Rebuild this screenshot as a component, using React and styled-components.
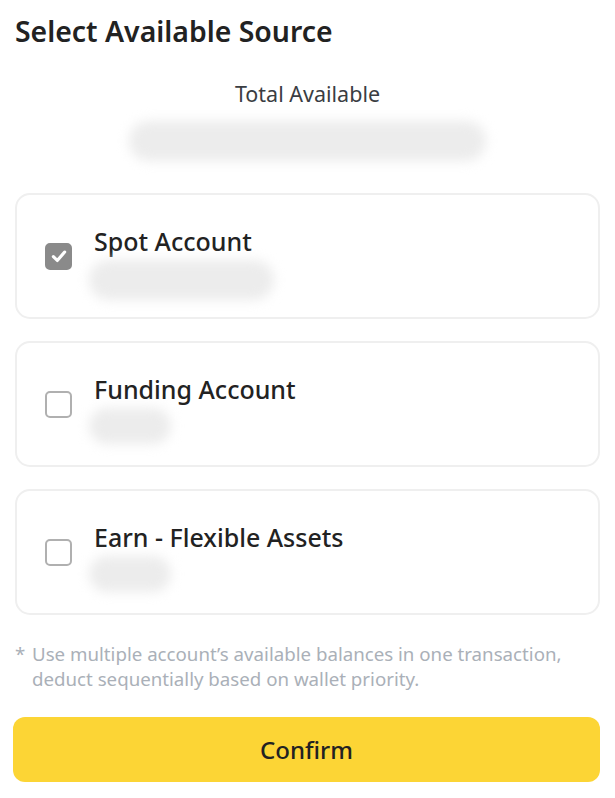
import React, { useState } from 'react'
import styled, { createGlobalStyle } from 'styled-components'

const GlobalStyle = createGlobalStyle`
  body {
    margin: 0;
    background: #fff;
    font-family: 'Noto Sans', 'Open Sans', sans-serif;
    color: #1e2026;
  }
`

const Page = styled.div`
  width: 615px;
  box-sizing: border-box;
  padding: 13px 15px 0 15px;
  display: flex;
  flex-direction: column;
`

const Title = styled.h1`
  margin: 0;
  font-size: 28.4px;
  font-weight: 600;
  line-height: 36px;
  color: #222;
`

const TotalBlock = styled.div`
  display: flex;
  flex-direction: column;
  align-items: center;
  margin-top: 31px;
`

const TotalLabel = styled.div`
  font-size: 21.5px;
  line-height: 28px;
  color: #3a3d42;
`

const Blur = styled.div`
  width: ${p => p.w}px;
  height: ${p => p.h}px;
  margin-top: ${p => p.mt || 0}px;
  margin-left: ${p => p.ml || 0}px;
  border-radius: ${p => p.h / 2}px;
  background: #ececec;
  filter: blur(6px);
`

const Cards = styled.div`
  display: flex;
  flex-direction: column;
  gap: 22px;
  margin-top: 32px;
`

const Card = styled.div`
  height: 126px;
  box-sizing: border-box;
  border: 2px solid #efefef;
  border-radius: 15px;
  display: flex;
  align-items: center;
  padding-left: 28px;
  cursor: pointer;
`

const Check = styled.div`
  width: 27px;
  height: 27px;
  box-sizing: border-box;
  border-radius: 5px;
  flex-shrink: 0;
  display: flex;
  align-items: center;
  justify-content: center;
  background: ${p => (p.checked ? '#8a8a8a' : '#fff')};
  border: 2px solid ${p => (p.checked ? '#8a8a8a' : '#b0b0b0')};
`

const Info = styled.div`
  align-self: flex-start;
  display: flex;
  flex-direction: column;
  margin-left: 22px;
  margin-top: 29px;
`

const Label = styled.div`
  font-size: 25px;
  font-weight: 500;
  line-height: 34px;
  color: #222;
`

const Note = styled.p`
  margin: 26px 0 0 0;
  display: flex;
  font-size: 18.7px;
  line-height: 25px;
  color: #aab0b8;
`

const Star = styled.span`
  width: 17px;
  flex-shrink: 0;
`

const ConfirmButton = styled.button`
  margin-top: 26px;
  margin-left: -2px;
  height: 65px;
  width: 587px;
  border: none;
  border-radius: 12px;
  background: #fcd535;
  font-family: 'Noto Sans', 'Open Sans', sans-serif;
  font-size: 24px;
  font-weight: 500;
  color: #222;
  cursor: pointer;
`

const CheckIcon = () => (
  <svg width="18" height="18" viewBox="0 0 16 16">
    <path d="M3 8.5 L6.5 12 L13 4.5" fill="none" stroke="#fff" strokeWidth="2.8" strokeLinecap="round" strokeLinejoin="round" />
  </svg>
)

const accounts = [
  { name: 'Spot Account', blur: 185, h: 40 },
  { name: 'Funding Account', blur: 82, h: 36 },
  { name: 'Earn - Flexible Assets', blur: 82, h: 36 },
]

export default function App() {
  const [selected, setSelected] = useState([true, false, false])

  const toggle = i => {
    setSelected(s => s.map((v, j) => (j === i ? !v : v)))
  }

  return (
    <Page>
      <GlobalStyle />
      <Title>Select Available Source</Title>
      <TotalBlock>
        <TotalLabel>Total Available</TotalLabel>
        <Blur w={357} h={40} mt={13} />
      </TotalBlock>
      <Cards>
        {accounts.map((a, i) => (
          <Card key={a.name} onClick={() => toggle(i)}>
            <Check checked={selected[i]}>{selected[i] && <CheckIcon />}</Check>
            <Info>
              <Label>{a.name}</Label>
              <Blur w={a.blur} h={a.h} mt={2} ml={-5} />
            </Info>
          </Card>
        ))}
      </Cards>
      <Note>
        <Star>*</Star>
        <span>
          Use multiple account’s available balances in one transaction,
          <br />
          deduct sequentially based on wallet priority.
        </span>
      </Note>
      <ConfirmButton>Confirm</ConfirmButton>
    </Page>
  )
}
